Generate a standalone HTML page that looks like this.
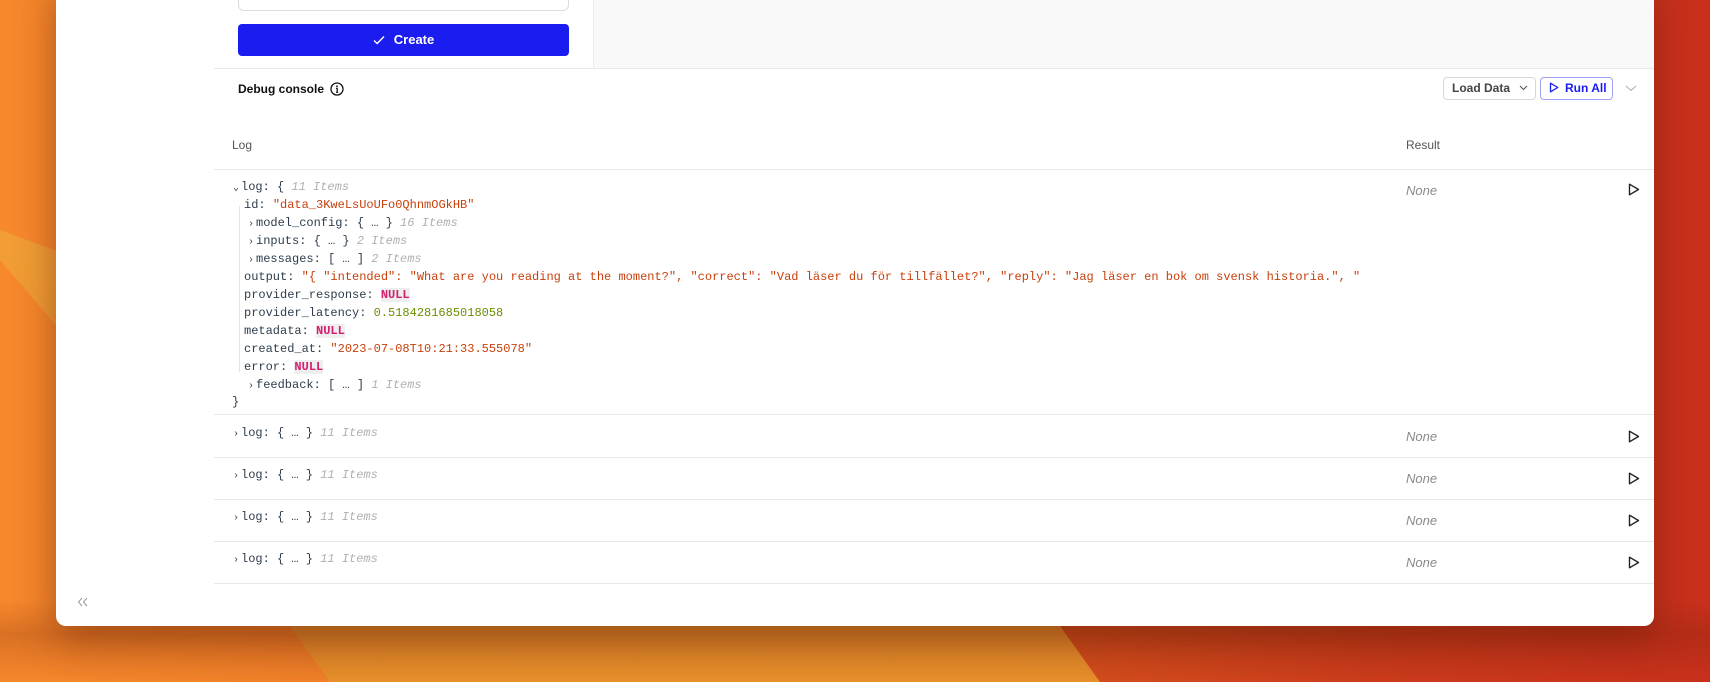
<!DOCTYPE html>
<html><head><meta charset="utf-8"><style>
*{margin:0;padding:0;box-sizing:border-box}
body{width:1710px;height:682px;overflow:hidden;position:relative;font-family:"Liberation Sans",sans-serif;
background:linear-gradient(90deg,#f7882c 0%,#ee7e28 25%,#d8561e 55%,#cc3c1c 80%,#c8301c 100%)}
.tri{position:absolute;left:0;top:0;width:1710px;height:682px;background:linear-gradient(180deg,#f7a53a,#e8902c);clip-path:polygon(0 230px,0 260px,60px 330px,60px 626px,290px 626px,330px 682px,1100px 682px,1060px 626px)}
.shade{position:absolute;left:0;top:0;width:1710px;height:682px;background:linear-gradient(180deg,rgba(0,0,0,0) 88%,rgba(110,30,5,0.22) 93%,rgba(0,0,0,0) 100%)}
.win{position:absolute;left:56px;top:-20px;width:1598px;height:646px;background:#fff;border-radius:10px;box-shadow:0 10px 40px rgba(80,20,0,.45);overflow:hidden}
.a{position:absolute}
.mono{font-family:"Liberation Mono","DejaVu Sans Mono",monospace;font-size:12px;color:#2e3d4d;white-space:nowrap}
.mono div,.ln{height:18px;line-height:18px;white-space:pre}
.s{color:#c8400c}.n{color:#6b8e00}.g{color:#b0b0b0;font-style:italic}
.nl{color:#d3206f;font-weight:bold;background:#eeeeee;border-radius:2px}
.cv{display:inline-block;width:8px;font-size:10px;line-height:10px;color:#2e3d4d}
.hr{position:absolute;left:158px;right:0;height:1px;background:#e8e8e8}
.none{position:absolute;left:1350px;font-style:italic;color:#8a8a8a;font-size:13px}
.play{position:absolute;left:1572px}
</style></head><body>
<div class="tri"></div>
<div class="shade"></div>
<div class="win">
 <div class="a" style="left:537px;top:0;width:1061px;height:88px;background:#f9f9f9;border-left:1px solid #ececec"></div>
 <div class="a" style="left:182px;top:0;width:331px;height:31px;border:1px solid #dcdcdc;border-radius:6px;background:#fff"></div>
 <div class="a" style="left:182px;top:44px;width:331px;height:32px;background:#1a1cf0;border-radius:4px;color:#fff;font-weight:bold;font-size:13px;line-height:32px;text-align:center">
  <svg width="12" height="10" viewBox="0 0 12 10" style="vertical-align:-1px;margin-right:9px"><path d="M1 5.5l3.2 3L11 1.5" fill="none" stroke="#fff" stroke-width="1.4"/></svg>Create</div>
 <div class="hr" style="top:88px"></div>
 <div class="a" style="left:182px;top:102px;font-weight:bold;font-size:12px;color:#111">Debug console</div>
 <svg class="a" style="left:274px;top:102px" width="14" height="14" viewBox="0 0 14 14"><circle cx="7" cy="7" r="6" fill="none" stroke="#111" stroke-width="1.3"/><circle cx="7" cy="4.3" r="0.9" fill="#111"/><path d="M6 6.3h1.2v4M6 10.3h2.2" stroke="#111" stroke-width="1.2" fill="none"/></svg>
 <div class="a" style="left:1387px;top:97px;width:93px;height:23px;border:1px solid #d8d8d8;border-radius:4px;font-size:12px;color:#444;line-height:21px;padding-left:8px;font-weight:bold">Load Data<svg width="9" height="6" viewBox="0 0 9 6" style="margin-left:9px;vertical-align:1px"><path d="M1 1l3.5 3.5L8 1" fill="none" stroke="#555" stroke-width="1.1"/></svg></div>
 <div class="a" style="left:1484px;top:97px;width:73px;height:23px;border:1px solid #9fa2f5;border-radius:4px;font-size:12px;color:#1a1cf0;line-height:21px;padding-left:8px;font-weight:bold"><svg width="10" height="11" viewBox="0 0 10 11" style="vertical-align:-1px;margin-right:6px"><path d="M1.5 1.2v8.6L8.8 5.5z" fill="none" stroke="#1a1cf0" stroke-width="1.3" stroke-linejoin="round"/></svg>Run All</div>
 <svg class="a" style="left:1569px;top:105px" width="12" height="7" viewBox="0 0 12 7"><path d="M1 1l5 4.5L11 1" fill="none" stroke="#aaa" stroke-width="1"/></svg>
 <div class="a" style="left:176px;top:158px;font-size:12px;color:#555">Log</div>
 <div class="a" style="left:1350px;top:158px;font-size:12px;color:#555">Result</div>
 <div class="hr" style="top:189px"></div>
 <div class="a" style="left:183px;top:226px;width:1px;height:166px;background:#e4e4e4"></div>
 <div class="a mono" style="left:177px;top:198px"><div><span class="cv">⌄</span>log: { <span class="g">11 Items</span></div><div style="padding-left:11px">id: <span class="s">"data_3KweLsUoUFo0QhnmOGkHB"</span></div><div style="padding-left:15px"><span class="cv">›</span>model_config: { … } <span class="g">16 Items</span></div><div style="padding-left:15px"><span class="cv">›</span>inputs: { … } <span class="g">2 Items</span></div><div style="padding-left:15px"><span class="cv">›</span>messages: [ … ] <span class="g">2 Items</span></div><div style="padding-left:11px">output: <span class="s">"{ "intended": "What are you reading at the moment?", "correct": "Vad läser du för tillfället?", "reply": "Jag läser en bok om svensk historia.", "</span></div><div style="padding-left:11px">provider_response: <span class="nl">NULL</span></div><div style="padding-left:11px">provider_latency: <span class="n">0.5184281685018058</span></div><div style="padding-left:11px">metadata: <span class="nl">NULL</span></div><div style="padding-left:11px">created_at: <span class="s">"2023-07-08T10:21:33.555078"</span></div><div style="padding-left:11px">error: <span class="nl">NULL</span></div><div style="padding-left:15px"><span class="cv">›</span>feedback: [ … ] <span class="g">1 Items</span></div><div style="margin-left:-1px;height:16px;line-height:16px">}</div></div>
 <div class="none" style="top:203px">None</div>
 <svg class="play" style="top:203px" width="12" height="13" viewBox="0 0 12 13"><path d="M1.5 1.2v10.6L10.5 6.5z" fill="none" stroke="#222" stroke-width="1.4" stroke-linejoin="round"/></svg>
 <div class="hr" style="top:434px"></div>
 <div class="a mono ln" style="left:177px;top:444px"><span class="cv">›</span>log: { … } <span class="g">11 Items</span></div>
 <div class="none" style="top:449px">None</div>
 <svg class="play" style="top:450px" width="12" height="13" viewBox="0 0 12 13"><path d="M1.5 1.2v10.6L10.5 6.5z" fill="none" stroke="#222" stroke-width="1.4" stroke-linejoin="round"/></svg>
 <div class="hr" style="top:477px"></div>
 <div class="a mono ln" style="left:177px;top:486px"><span class="cv">›</span>log: { … } <span class="g">11 Items</span></div>
 <div class="none" style="top:491px">None</div>
 <svg class="play" style="top:492px" width="12" height="13" viewBox="0 0 12 13"><path d="M1.5 1.2v10.6L10.5 6.5z" fill="none" stroke="#222" stroke-width="1.4" stroke-linejoin="round"/></svg>
 <div class="hr" style="top:519px"></div>
 <div class="a mono ln" style="left:177px;top:528px"><span class="cv">›</span>log: { … } <span class="g">11 Items</span></div>
 <div class="none" style="top:533px">None</div>
 <svg class="play" style="top:534px" width="12" height="13" viewBox="0 0 12 13"><path d="M1.5 1.2v10.6L10.5 6.5z" fill="none" stroke="#222" stroke-width="1.4" stroke-linejoin="round"/></svg>
 <div class="hr" style="top:561px"></div>
 <div class="a mono ln" style="left:177px;top:570px"><span class="cv">›</span>log: { … } <span class="g">11 Items</span></div>
 <div class="none" style="top:575px">None</div>
 <svg class="play" style="top:576px" width="12" height="13" viewBox="0 0 12 13"><path d="M1.5 1.2v10.6L10.5 6.5z" fill="none" stroke="#222" stroke-width="1.4" stroke-linejoin="round"/></svg>
 <div class="hr" style="top:603px"></div>
 <svg class="a" style="left:21px;top:617px" width="12" height="10" viewBox="0 0 12 10"><path d="M5 1L1.5 5 5 9M10 1L6.5 5 10 9" fill="none" stroke="#999" stroke-width="1"/></svg>
</div>
</body></html>
